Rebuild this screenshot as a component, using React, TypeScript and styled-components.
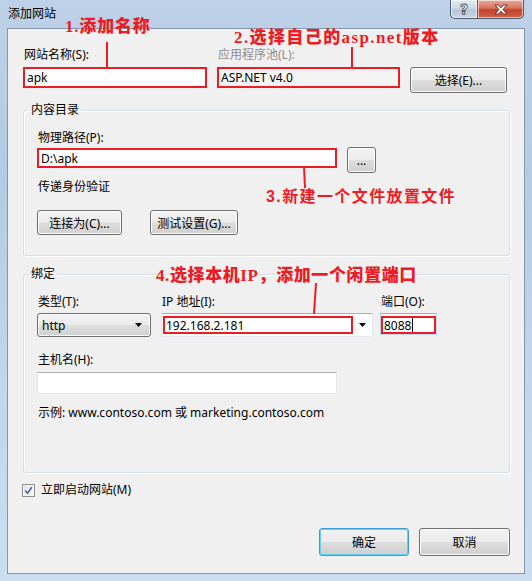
import styled, { createGlobalStyle, css } from 'styled-components'

const UI_FONT = `"Segoe UI", "Noto Sans", "Noto Sans CJK SC", sans-serif`
const NOTE_RED = '#ed1c24'

const GlobalStyle = createGlobalStyle`
  html, body {
    margin: 0;
    padding: 0;
    background: #ffffff;
  }
  body {
    font-family: ${UI_FONT};
    font-size: 12px;
    color: #000;
  }
`

const Frame = styled.div`
  position: relative;
  width: 532px;
  height: 581px;
  box-sizing: border-box;
  padding: 0 7px 7px 7px;
  display: flex;
  flex-direction: column;
  background: linear-gradient(180deg, #bdd1e8 0%, #b4cbe5 30%, #c3d7ed 70%, #cbddf0 100%);
  overflow: hidden;
`

const TitleBar = styled.div`
  height: 28px;
  display: flex;
  justify-content: space-between;
  align-items: flex-start;
`

const Title = styled.div`
  padding: 6px 0 0 1px;
  line-height: 16px;
`

const CaptionGroup = styled.div`
  display: flex;
  margin-right: 1px;
`

const CaptionButton = styled.div<{ $close?: boolean }>`
  box-sizing: border-box;
  width: ${p => (p.$close ? 46 : 28)}px;
  height: 19px;
  display: flex;
  align-items: center;
  justify-content: center;
  border: 1px solid #4b5b70;
  border-top: none;
  background: linear-gradient(180deg, #e3eaf2 0%, #cfd9e5 45%, #b7c6d8 55%, #c9d5e3 100%);
  box-shadow: inset 0 0 0 1px rgba(255, 255, 255, 0.6);
  color: #fff;
  font-family: "DejaVu Sans", sans-serif;
  font-weight: bold;
  font-size: 14px;
  -webkit-text-stroke: 0.8px #3a4656;
  ${p =>
    p.$close
      ? css`
          border-left: none;
          border-radius: 0 0 5px 0;
          background: linear-gradient(180deg, #e9a99b 0%, #d9735e 45%, #c4412b 55%, #d1624a 100%);
        `
      : css`
          border-radius: 0 0 0 5px;
        `}
`

const Client = styled.div`
  flex: 1;
  border: 1px solid #8496ac;
  background: #f0f0f0;
  padding: 18px 14px 0 15px;
  display: flex;
  flex-direction: column;
`

const SiteGrid = styled.div`
  display: grid;
  grid-template-columns: 184px 183px 97px;
  grid-template-rows: 16px auto;
  column-gap: 10px;
  row-gap: 4px;
  align-items: start;
`

const Label = styled.div<{ $disabled?: boolean }>`
  line-height: 16px;
  padding-left: 1px;
  color: ${p => (p.$disabled ? '#8d8d8d' : '#000')};
  white-space: nowrap;
`

const TextBox = styled.div<{ $marked?: boolean; $readOnly?: boolean; $w?: number; $h?: number }>`
  box-sizing: border-box;
  width: ${p => (p.$w ? `${p.$w}px` : 'auto')};
  height: ${p => p.$h ?? 21}px;
  display: flex;
  align-items: center;
  padding: 0 3px;
  border: 1px solid;
  border-color: #abadb3 #e3e9ef #e3e9ef #e2e3ea;
  background: ${p => (p.$readOnly ? '#f4f4f4' : '#fff')};
  white-space: nowrap;
  ${p =>
    p.$marked &&
    css`
      border: 2px solid ${NOTE_RED};
      padding: 0 2px;
    `}
`

const Button = styled.button<{ $w: number; $h: number; $default?: boolean }>`
  box-sizing: border-box;
  width: ${p => p.$w}px;
  height: ${p => p.$h}px;
  padding: 0;
  font: inherit;
  color: #000;
  border: 1px solid #707070;
  border-radius: 3px;
  background: linear-gradient(180deg, #f2f2f2 0%, #ebebeb 48%, #dddddd 52%, #cfcfcf 100%);
  box-shadow: inset 0 0 0 1px #fbfbfb;
  ${p =>
    p.$default &&
    css`
      border-color: #3c9fd0;
      box-shadow: inset 0 0 0 1px #5fd2f6;
    `}
`

const Group = styled.fieldset`
  margin: 0;
  padding: 0;
  min-inline-size: 0;
  border: 1px solid #d5dfe5;
  border-radius: 3px;
  box-shadow: inset 1px 1px 0 #ffffff, 1px 1px 0 #ffffff;
`

const GroupTitle = styled.legend`
  margin-left: 5px;
  padding: 0 2px;
  line-height: 16px;
`

const GroupBody = styled.div<{ $bottom: number }>`
  padding: 12px 13px ${p => p.$bottom}px 13px;
  display: flex;
  flex-direction: column;
`

const Row = styled.div<{ $gap?: number; $top?: number }>`
  display: flex;
  align-items: flex-start;
  gap: ${p => p.$gap ?? 10}px;
  margin-top: ${p => p.$top ?? 0}px;
`

const Column = styled.div<{ $indent?: number }>`
  display: flex;
  flex-direction: column;
  gap: 3px;
  margin-left: ${p => p.$indent ?? 0}px;
`

const DropList = styled.div<{ $w: number }>`
  box-sizing: border-box;
  width: ${p => p.$w}px;
  height: 24px;
  display: flex;
  align-items: center;
  justify-content: space-between;
  padding: 0 7px 0 4px;
  border: 1px solid #707070;
  border-radius: 3px;
  background: linear-gradient(180deg, #f2f2f2 0%, #ebebeb 48%, #dddddd 52%, #cfcfcf 100%);
  box-shadow: inset 0 0 0 1px #fbfbfb;
`

const ComboEdit = styled.div<{ $w: number }>`
  box-sizing: border-box;
  width: ${p => p.$w}px;
  height: 24px;
  display: flex;
  align-items: center;
  justify-content: space-between;
  padding: 0 5px 0 1px;
  border: 1px solid;
  border-color: #abadb3 #e3e9ef #e3e9ef #e2e3ea;
  background: #fff;
`

const MarkedField = styled.div<{ $w: number }>`
  box-sizing: border-box;
  width: ${p => p.$w}px;
  height: 18px;
  display: flex;
  align-items: center;
  padding: 0 1px;
  border: 2px solid ${NOTE_RED};
`

const Caret = styled.span`
  display: inline-block;
  width: 1px;
  height: 14px;
  background: #000;
  margin-left: 1px;
`

const PortBox = styled.div`
  box-sizing: border-box;
  width: 57px;
  height: 22px;
  padding: 2px 1px 0 0;
  border: 1px solid;
  border-color: #7eb4ea #c5daed #c5daed #b5cfe7;
  background: #fff;
`

const CheckRow = styled.div`
  display: flex;
  align-items: center;
  gap: 6px;
  margin: 9px 0 0 -1px;
  line-height: 16px;
`

const CheckBox = styled.div`
  box-sizing: border-box;
  width: 13px;
  height: 13px;
  border: 1px solid #8e8f8f;
  background: linear-gradient(135deg, #dcdcdc 0%, #f4f4f4 60%, #ffffff 100%);
  box-shadow: inset 0 0 0 1px #f4f4f4;
  display: flex;
  align-items: center;
  justify-content: center;
`

const Footer = styled.div`
  display: flex;
  justify-content: flex-end;
  gap: 10px;
  margin-top: 30px;
`

const NoteLayer = styled.svg`
  position: absolute;
  inset: 0;
  pointer-events: none;
`

const Note = styled.div<{ $x: number; $y: number; $spacing?: number; $plain?: boolean }>`
  position: absolute;
  left: ${p => p.$x}px;
  top: ${p => p.$y}px;
  color: ${NOTE_RED};
  white-space: nowrap;
  line-height: 20px;
  font-size: 17px;
  letter-spacing: ${p => p.$spacing ?? 1}px;
  font-family: "Liberation Serif", "Noto Sans CJK SC", serif;
  font-weight: 900;
  ${p =>
    p.$plain &&
    css`
      font-family: "Liberation Sans", "Noto Sans CJK SC", sans-serif;
      font-size: 16px;
      font-weight: 700;
    `}
`

const Arrow = () => (
  <svg width="8" height="4" viewBox="0 0 8 4">
    <path d="M0 0 L7 0 L3.5 4 Z" fill="#000" />
  </svg>
)

const CheckMark = () => (
  <svg width="9" height="9" viewBox="0 0 9 9">
    <path d="M1.2 4.5 L3.5 7.2 L7.8 1.2" fill="none" stroke="#4a5f9e" strokeWidth="1.5" />
  </svg>
)

const CloseGlyph = () => (
  <svg width="14" height="11" viewBox="0 0 14 11">
    <path
      d="M1 1 L4.5 1 L7 3.8 L9.5 1 L13 1 L9 5.5 L13 10 L9.5 10 L7 7.2 L4.5 10 L1 10 L5 5.5 Z"
      fill="#ffffff"
      stroke="#5a2620"
      strokeWidth="0.9"
      strokeLinejoin="round"
    />
  </svg>
)

const App = () => {
  return (
    <>
      <GlobalStyle />
      <Frame>
        <TitleBar>
          <Title>添加网站</Title>
          <CaptionGroup>
            <CaptionButton>?</CaptionButton>
            <CaptionButton $close>
              <CloseGlyph />
            </CaptionButton>
          </CaptionGroup>
        </TitleBar>

        <Client>
          <SiteGrid>
            <Label>网站名称(S):</Label>
            <Label $disabled>应用程序池(L):</Label>
            <div />
            <TextBox $marked>apk</TextBox>
            <TextBox $marked $readOnly>ASP.NET v4.0</TextBox>
            <Button $w={97} $h={26}>选择(E)...</Button>
          </SiteGrid>

          <Group style={{ marginTop: 9 }}>
            <GroupTitle>内容目录</GroupTitle>
            <GroupBody $bottom={20}>
              <Label>物理路径(P):</Label>
              <Row $top={1}>
                <TextBox $marked $w={300} $h={20} style={{ marginTop: 1 }}>D:\apk</TextBox>
                <Button $w={29} $h={26}>...</Button>
              </Row>
              <Label style={{ marginTop: 6 }}>传递身份验证</Label>
              <Row $gap={28} $top={15}>
                <Button $w={85} $h={25}>连接为(C)...</Button>
                <Button $w={88} $h={25}>测试设置(G)...</Button>
              </Row>
            </GroupBody>
          </Group>

          <Group style={{ marginTop: 10 }}>
            <GroupTitle>绑定</GroupTitle>
            <GroupBody $bottom={51}>
              <Row $gap={0}>
                <Column>
                  <Label>类型(T):</Label>
                  <DropList $w={114}>
                    <span>http</span>
                    <Arrow />
                  </DropList>
                </Column>
                <Column $indent={10}>
                  <Label>IP 地址(I):</Label>
                  <ComboEdit $w={212}>
                    <MarkedField $w={190}>192.168.2.181</MarkedField>
                    <Arrow />
                  </ComboEdit>
                </Column>
                <Column $indent={7}>
                  <Label>端口(O):</Label>
                  <PortBox>
                    <MarkedField $w={55}>
                      8088
                      <Caret />
                    </MarkedField>
                  </PortBox>
                </Column>
              </Row>
              <Label style={{ marginTop: 15 }}>主机名(H):</Label>
              <TextBox $w={300} $h={22} style={{ marginTop: 4 }} />
              <Label style={{ marginTop: 11 }}>示例: www.contoso.com 或 marketing.contoso.com</Label>
            </GroupBody>
          </Group>

          <CheckRow>
            <CheckBox>
              <CheckMark />
            </CheckBox>
            <span>立即启动网站(M)</span>
          </CheckRow>

          <Footer>
            <Button $w={90} $h={28} $default>确定</Button>
            <Button $w={91} $h={28}>取消</Button>
          </Footer>
        </Client>

        <NoteLayer width="532" height="581" viewBox="0 0 532 581">
          <g stroke={NOTE_RED} strokeWidth="2">
            <line x1="107" y1="42" x2="107" y2="68" />
            <line x1="352" y1="47" x2="352" y2="68" />
            <line x1="304" y1="167" x2="305" y2="188" />
            <line x1="316" y1="283" x2="314" y2="314" />
          </g>
        </NoteLayer>
        <Note $x={65} $y={17} $spacing={0.8}>1.添加名称</Note>
        <Note $x={234} $y={28} $spacing={1.4}>2.选择自己的asp.net版本</Note>
        <Note $x={266} $y={187} $spacing={1.4} $plain>3.新建一个文件放置文件</Note>
        <Note $x={156} $y={266} $spacing={0.6}>4.选择本机IP，添加一个闲置端口</Note>
      </Frame>
    </>
  )
}

export default App
